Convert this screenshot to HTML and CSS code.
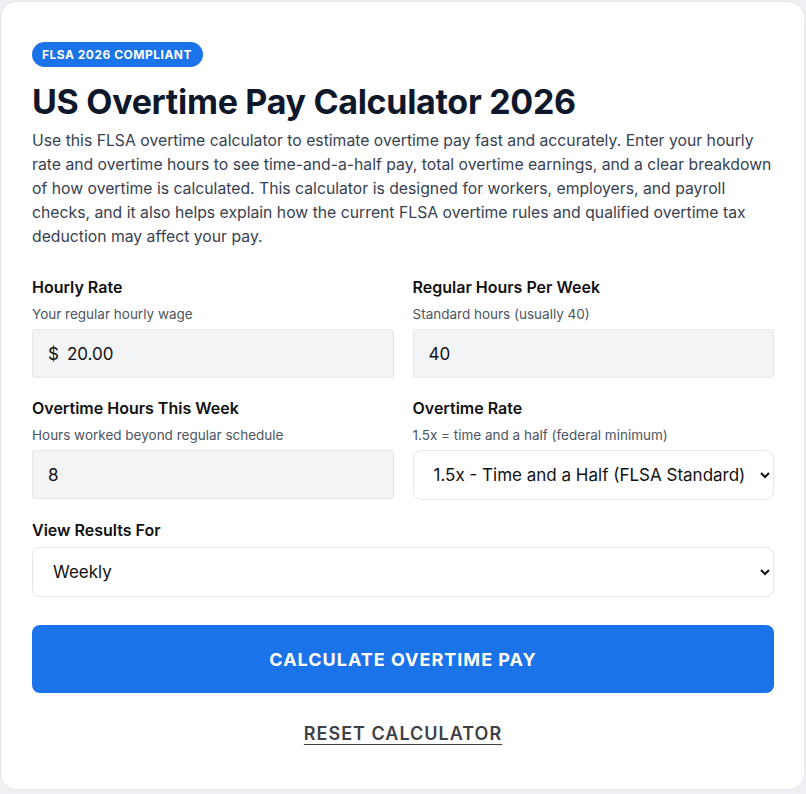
FILE: index.html
```html
<!DOCTYPE html>
<html lang="en">
<head>
<meta charset="UTF-8">
<meta name="viewport" content="width=device-width, initial-scale=1.0">
<title>US Overtime Pay Calculator 2026</title>
<link rel="stylesheet" href="styles.css">
</head>
<body>

<div class="calc-card">
  <span class="badge">FLSA 2026 Compliant</span>
  <h1 class="calc-title">US Overtime Pay Calculator 2026</h1>
  <p class="calc-intro">Use this FLSA overtime calculator to estimate overtime pay fast and accurately. Enter your hourly rate and overtime hours to see time-and-a-half pay, total overtime earnings, and a clear breakdown of how overtime is calculated. This calculator is designed for workers, employers, and payroll checks, and it also helps explain how the current FLSA overtime rules and qualified overtime tax deduction may affect your pay.</p>

  <div class="field-grid">
    <!-- Hourly rate -->
    <div class="field">
      <label class="field-label" for="rate">Hourly Rate</label>
      <span class="field-hint">Your regular hourly wage</span>
      <div class="input-box">
        <span class="prefix">$</span>
        <input id="rate" type="text" value="20.00">
      </div>
    </div>

    <!-- Regular hours -->
    <div class="field">
      <label class="field-label" for="reg">Regular Hours Per Week</label>
      <span class="field-hint">Standard hours (usually 40)</span>
      <div class="input-box">
        <input id="reg" type="text" value="40">
      </div>
    </div>

    <!-- Overtime hours -->
    <div class="field">
      <label class="field-label" for="ot">Overtime Hours This Week</label>
      <span class="field-hint">Hours worked beyond regular schedule</span>
      <div class="input-box">
        <input id="ot" type="text" value="8">
      </div>
    </div>

    <!-- Overtime rate -->
    <div class="field">
      <label class="field-label" for="mult">Overtime Rate</label>
      <span class="field-hint">1.5x = time and a half (federal minimum)</span>
      <select id="mult" class="select-box">
        <option>1.5x - Time and a Half (FLSA Standard)</option>
        <option>2x - Double Time</option>
      </select>
    </div>
  </div>

  <div class="field field-wide">
    <label class="field-label" for="period">View Results For</label>
    <select id="period" class="select-box">
      <option>Weekly</option>
      <option>Bi-Weekly</option>
      <option>Monthly</option>
      <option>Yearly</option>
    </select>
  </div>

  <button class="calc-btn">Calculate Overtime Pay</button>
  <div class="reset-row">
    <a href="#" class="reset-link">Reset Calculator</a>
  </div>
</div>

</body>
</html>
```

FILE: styles.css
```css
body {
  margin: 0;
  padding: 1px 1px 4px 0;
  background-color: #eef0f3;
  font-family: Inter, "Noto Sans", sans-serif;
  color: #111827;
}
.calc-card {
  background: #fff;
  border: 1px solid #e3e5e8;
  border-radius: 16px;
  padding: 40px 30px 44px 31px;
}
.badge {
  display: inline-block;
  background-color: #1a73e8;
  color: #fff;
  font-size: 12px;
  font-weight: 700;
  letter-spacing: 0.5px;
  text-transform: uppercase;
  padding: 5px 11px 4px 10px;
  border-radius: 999px;
  line-height: 16px;
}
.calc-title {
  font-size: 34px;
  font-weight: 700;
  margin: 15px 0 7px;
  line-height: 40px;
  letter-spacing: -0.3px;
  color: #0f172a;
}
.calc-intro {
  font-size: 15.75px;
  line-height: 24px;
  color: #374151;
  margin: 0 0 28px;
}
.field-grid {
  display: grid;
  grid-template-columns: 1fr 1fr;
  column-gap: 19px;
  row-gap: 20px;
}
.field {
  display: flex;
  flex-direction: column;
}
.field-label {
  font-size: 16px;
  font-weight: 600;
  line-height: 20px;
  color: #111;
}
.field-hint {
  font-size: 13.5px;
  color: #4b5563;
  line-height: 18px;
  margin: 8px 0 6px;
}
.input-box {
  display: flex;
  align-items: center;
  height: 47px;
  background: #f3f4f6;
  border: 1px solid #e5e7eb;
  border-radius: 3px;
  padding: 0 15px;
}
.prefix {
  font-size: 17px;
  color: #111;
  margin-right: 8px;
}
.input-box input {
  border: none;
  background: transparent;
  font-family: Inter, "Noto Sans", sans-serif;
  font-size: 17px;
  color: #111;
  padding: 0;
  width: 100%;
  outline: none;
}
.select-box {
  height: 50px;
  border: 1px solid #e5e7eb;
  border-radius: 8px;
  background: #fff;
  font-family: Inter, "Noto Sans", sans-serif;
  font-size: 17px;
  color: #111;
  padding: 0 8px 0 16px;
}
.field-wide {
  margin-top: 20px;
}
.field-wide .field-label {
  margin-bottom: 7px;
}
.calc-btn {
  display: block;
  width: 100%;
  height: 68px;
  margin-top: 28px;
  background-color: #1a73e8;
  color: #fff;
  border: none;
  border-radius: 8px;
  font-family: Inter, "Noto Sans", sans-serif;
  font-size: 18px;
  font-weight: 700;
  letter-spacing: 1px;
  text-transform: uppercase;
  cursor: pointer;
}
.reset-row {
  text-align: center;
  margin-top: 30px;
  line-height: 22px;
}
.reset-link {
  color: #3f3f46;
  font-size: 18px;
  font-weight: 600;
  letter-spacing: 1px;
  text-transform: uppercase;
  text-underline-offset: 4px;
}
```
